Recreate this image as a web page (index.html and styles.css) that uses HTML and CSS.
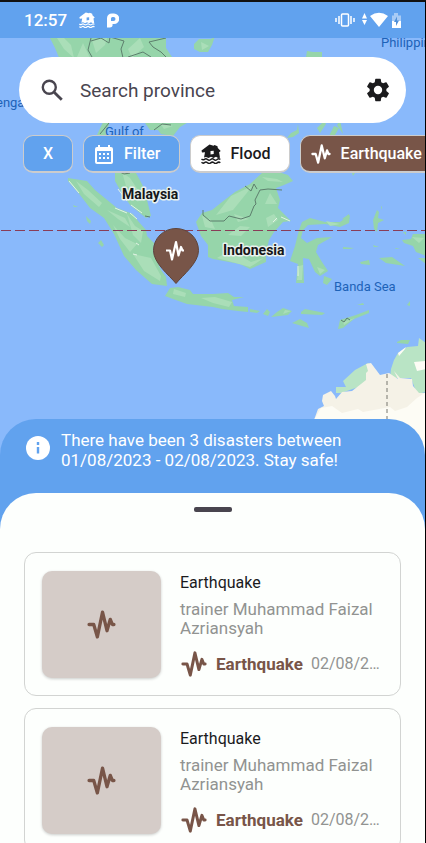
FILE: index.html
```html
<!DOCTYPE html>
<html lang="en">
<head>
<meta charset="utf-8">
<meta name="viewport" content="width=device-width, initial-scale=1">
<title>Disaster map</title>
<link rel="stylesheet" href="styles.css">
</head>
<body>
<svg class="defs" width="0" height="0" aria-hidden="true">
  <symbol id="quake" viewBox="0 0 28 28"><path d="M2 14h4.500L10 26 15 2 19.300 20 22.500 9 24.500 14h1.500" fill="none" stroke="currentColor" stroke-width="3.200" stroke-linejoin="round" stroke-linecap="round"/></symbol>
  <symbol id="flood" viewBox="0 0 20 20"><path d="M.5 6.500 8.500.5l4 1.200L13.500 1l3 1.200.3 1.800 2.900 3-1.600 1.200.9 5.500-2 .3-2-1.200-2.500 1.300-2.500-1.300-2.500 1.300-2.500-1.200-2 .6L4 8.200 1 8.500zM9.500 7v3.500l3.200-.4V6.700z" fill="currentColor" fill-rule="evenodd"/><path d="M.5 15q1.500 1.500 3 .3t3 .2 3.200 0 3.200 0 3.200 0 3.200 0M.5 18.300q1.500 1.500 3 .3t3 .2 3.200 0 3.200 0 3.200 0 3.200 0" fill="none" stroke="currentColor" stroke-width="1.500"/></symbol>
</svg>
<div class="app">
  <div class="map">
    <svg class="map-art" viewBox="0 0 425 490" preserveAspectRatio="xMidYMin slice" role="img" aria-label="Map of Indonesia">
      <rect width="425" height="490" fill="#89b9fb"/>
      <g fill="#96d5aa">
        <path d="M49 36 55 48 60 60H174L166 48 166 36z"/>
        <path d="M194 44 199 39 211 39 215 36 212 45 208 52 200 52 194 49z"/>
        <path d="M306 57 307 51 313 52 322 52 322 57z"/>
        <path d="M97 135 104 120H110L106 135zM143 120H192L180 127 173 136 161 134 158 130 150 130z"/>
        <path d="M115 171H135L144 188 151 216 146 218 130 205 120 190 115 181z"/>
        <path d="M68 178 87 181 95 190 117 208 133 214 138 221 146 230 147 236 154 243 153 252 161 270 166 277 167 286 152 284 136 270 124 256 114 234 104 218 90 208 80 195 68 181z"/>
        <path d="M73 205 78 207 74 207zM86 216 91 221 90 224 87 221zM98 243 101 240 104 245 102 247z"/>
        <path d="M165 296 170 288 178 287 190 290 193 294 213 294 228 293 234 297 244 297 232 300 234 306 248 307 248 312 238 311 222 309 213 307 187 304 173 299z"/>
        <path d="M250 309 260 311 257 313 250 312zM263 314 267 309 270 312 268 316zM271 317 277 312 283 308 292 311 288 315zM301 312 305 309 325 313 322 315 301 314zM292 323 300 319 307 323 309 328 302 326zM338 329 340 320 356 315 369 310 369 313 354 319 343 328zM357 305 363 303 364 305z"/>
        <path d="M196 222 202 213 212 210 222 202 235 192 250 184 262 173 275 171 288 175 293 181 284 185 276 188 280 200 278 208 285 215 291 221 283 222 274 232 269 240 266 253 266 262 250 269 240 264 213 259 208 257 208 245 201 236z"/>
        <path d="M299 230 302 222 310 218 325 222 340 222 350 215 349 223 340 227 325 224 308 225 303 230 301 238 307 243 317 238 332 237 318 245 316 252 322 262 328 271 320 276 315 272 309 259 303 258 304 283 296 283 298 264 290 261 295 246z"/>
        <path d="M324 276 332 279 327 285 323 283zM360 262 369 260 370 265 361 264zM379 258 392 257 405 266 386 263zM343 247 354 248 350 249 343 249zM373 245 379 247 374 247zM395 248 400 248 396 249zM373 220 377 210 379 212 378 218 384 220 378 223 377 232 374 229zM381 207 382 206 382 210z"/>
        <path d="M402 240 411 239 413 234 426 234V256L416 252 413 246 404 243zM418 258H426V264zM403 232 406 232 406 235zM407 305 410 301 410 306z"/>
        <path d="M287 138 291 133 297 130 298 124 299 133 293 137zM317 128 324 121 326 124 320 133zM329 136 334 126 339 128 335 135zM340 120 343 134 337 125zM352 173 355 173 353 176zM342 219 349 214 349 221z"/>
        <path d="M397 342 401 340 410 340 408 344 397 343z"/>
      </g>
      <g fill="#aadeb8">
        <path d="M57 38 64 49 74 58 71 45 64 38zM77 57 83 43 90 58zM92 40 107 38 105 45 96 53zM128 49 140 38 144 47 132 58zM201 42 209 46 202 50zM122 172 130 178 138 190 126 186zM126 191 140 203 132 198zM76 181 88 190 102 203 99 207 84 194zM107 210 125 218 130 227 118 219zM113 225 125 238 137 244 130 252 120 239zM127 214 135 226 143 231 141 243 133 235zM133 254 151 258 161 276 160 281 144 271zM174 289 186 293 185 297 173 294zM201 298 215 297 232 302 229 307 213 303zM216 215 231 196 252 186 246 194 233 210zM202 216 211 220 215 229 205 227zM262 177 277 179 283 182 268 181zM266 218 274 214 278 220 268 227zM217 258 231 250 251 262 264 258 250 267zM299 266 303 265 302 280 297 280zM317 267 325 270 320 274zM326 221 340 224 330 226zM412 237 424 238 419 243zM343 322 355 318 344 325zM285 310 291 311 283 314zM160 123 173 126 164 129z"/>
        <path d="M228 235 240 226 250 227 241 236zM270 193 277 204 265 204zM234 214 249 219 238 222z"/>
      </g>
      <g fill="none" stroke="#e2f3e4" stroke-width="1">
        <path d="M69 181 79 193M115 208 127 213M130 213 137 219M118 189 127 201M131 205 142 213M136 243 139 245M133 254 137 255M281 217 290 221M273 222 277 218M298 266V276"/>
      </g>
      <path fill="#b9e4c5" d="M336 387 346 387 343 381 355 370 368 363 372 365 370 383 341 393 336 393zM391 369 394 360 398 353 407 347 418 346 419 338 426 343V392L417 394 411 378 390 378z"/>
      <path fill="#f5f2e7" d="M314 420 318 409 324 406 322 401 323 395 331 391 335 396 336 399 342 392 352 391 361 384 366 380 366 373 368 371 366 364 371 363 380 375 389 373 398 379 394 371 400 378 412 379 413 386 419 393 426 393V490H314z"/>
      <path fill="#fdfcf5" d="M314 420 321 408 332 406 342 413 358 409 363 412 390 407 395 411 407 407 417 398 426 392V490H314zM414 362 426 361V369L417 371zM398 353 406 347 405 349 399 356z"/>
      <g fill="none" stroke="#5d7f6d" stroke-width="1">
        <path d="M91 38 88 50 92 57M91 41 101 38 109 43 110 37 124 41 121 49 123 58M128 57 137 54 143 52 151 57M166 38 149 42 153 47 161 52 166 57M100 134 109 123M154 130 162 124 171 125M120 172 124 174 130 173M145 216 150 217M203 210V215L210 221 224 221 229 216 241 219 250 216 254 206 256 204 255 200 260 190 268 189 282 190M245 186 251 191 254 184 257 189M341 320 344 322 347 318 350 320"/>
        <path d="M387 374V420" stroke="#77776e" stroke-dasharray="4 3"/>
      </g>
      <path d="M1 230.500H425" fill="none" stroke="#893d58" stroke-width="1" stroke-dasharray="10 4"/>
      <g class="sea-label">
        <text x="-4" y="107">enga</text>
        <text x="381" y="47">Philippin</text>
        <text x="105" y="136">Gulf of</text>
        <text x="334" y="291">Banda Sea</text>
      </g>
      <g class="country-label">
        <text x="122" y="199">Malaysia</text>
        <text x="223" y="255">Indonesia</text>
      </g>
      <g transform="translate(153 228)">
        <path d="M23 55.500C16 47 .5 35 .5 22.500a22.500 22 0 0 1 45 0C45.500 35 30 47 23 55.500z" fill="#785548" stroke="#5f4439"/>
        <path d="M13 22.500h4l2 9L23 14l2.500 13.500 2.500-8.500 1.500 3.500H31" fill="none" stroke="#fff" stroke-width="2.200" stroke-linejoin="round"/>
      </g>
    </svg>
  </div>

  <div class="status">
    <span class="time">12:57</span>
    <svg class="status-flood" viewBox="0 0 20 20"><use href="#flood"/></svg>
    <svg class="status-p" viewBox="0 0 12 15"><path d="M0 5a5 5 0 0 1 5-4.500h2a5 5 0 0 1 0 10.500H5.500A3 3 0 0 1 2.800 14.500H0zM5.500 4A1.500 1.500 0 0 0 4 5.500V8h2.500a2 2 0 0 0 0-4z" fill="#fff" fill-rule="evenodd"/></svg>
    <svg class="status-system" viewBox="0 0 66 17">
      <g fill="none" stroke="#fff" stroke-width="1.500"><rect x="6.500" y="2" width="7" height="12" rx="1"/><path d="M4 4v8M1 6v4M16 4v8M19 6v4"/></g>
      <path d="M29.500 1 32 6.500h-5zM29.500 13 27 8h5zM35 4q9-6.500 18 0l-9 11z" fill="#fff"/>
      <path d="M57 3.500h2V1h4v2.500h3V9h-9z" fill="#a8cbf5"/><path d="M57 9h9v7h-9z" fill="#fff"/><path d="m62 4.500-3 5.500h2v4l3-5.500h-2z" fill="#4f8fd8"/>
    </svg>
  </div>

  <form class="search">
    <label for="province"><svg viewBox="0 0 24 24" aria-label="Search"><circle cx="9.500" cy="9.500" r="6" fill="none" stroke="currentColor" stroke-width="2.200"/><path d="m14 14 7 7" stroke="currentColor" stroke-width="2.600"/></svg></label>
    <input id="province" type="text" placeholder="Search province">
    <button type="button" aria-label="Settings"><svg viewBox="0 0 24 24"><path fill="currentColor" d="M19.140 12.940c.04-.3.060-.61.060-.94s-.02-.64-.07-.94l2.030-1.580a.49.49 0 0 0 .12-.61l-1.920-3.320a.49.49 0 0 0-.59-.22l-2.390.96c-.5-.38-1.030-.7-1.620-.94l-.36-2.540a.48.48 0 0 0-.48-.41h-3.840c-.24 0-.43.17-.47.41l-.36 2.540c-.59.24-1.130.57-1.620.94l-2.390-.96a.49.49 0 0 0-.59.22L2.740 8.870a.47.47 0 0 0 .12.610l2.030 1.580a7.800 7.800 0 0 0-.01 1.880l-2.030 1.580a.49.49 0 0 0-.12.610l1.920 3.320c.12.220.37.290.59.220l2.390-.96c.5.380 1.030.7 1.620.94l.36 2.540c.05.240.24.410.48.410h3.840c.24 0 .44-.17.47-.41l.36-2.540c.59-.24 1.130-.56 1.620-.94l2.390.96c.22.080.47 0 .59-.22l1.920-3.320a.47.47 0 0 0-.12-.61zM12 15.600a3.600 3.600 0 1 1 0-7.200 3.600 3.600 0 0 1 0 7.200z"/></svg></button>
  </form>

  <nav class="chips" aria-label="Disaster filters">
    <button class="chip chip-clear" type="button">X</button>
    <button class="chip" type="button"><svg viewBox="0 0 20 20"><path fill="currentColor" fill-rule="evenodd" d="M4 1h2v2h8V1h2v2h1a2 2 0 0 1 2 2v13a2 2 0 0 1-2 2H3a2 2 0 0 1-2-2V5a2 2 0 0 1 2-2h1zM3 7v11h14V7z"/><path fill="currentColor" d="M5 9h2v2H5zM9 9h2v2H9zM13 9h2v2h-2zM5 13h2v2H5zM9 13h2v2H9zM13 13h2v2h-2z"/></svg>Filter</button>
    <button class="chip chip-flood" type="button"><svg viewBox="0 0 20 20"><use href="#flood"/></svg>Flood</button>
    <button class="chip chip-quake" type="button"><svg viewBox="0 0 28 28"><use href="#quake"/></svg>Earthquake</button>
  </nav>

  <section class="sheet">
    <div class="notice">
      <svg viewBox="0 0 24 24" aria-hidden="true"><circle cx="12" cy="12" r="12" fill="#fff"/><path d="M12 11v6.500M12 6v3" stroke="#61a2ee" stroke-width="2.400"/></svg>
      <p>There have been 3 disasters between 01/08/2023 - 02/08/2023. Stay safe!</p>
    </div>
    <div class="reports">
      <div class="handle"></div>
      <article class="card">
        <div class="thumb"><svg viewBox="0 0 28 28"><use href="#quake"/></svg></div>
        <div class="details">
          <h2>Earthquake</h2>
          <p>trainer Muhammad Faizal Azriansyah</p>
          <div class="meta"><svg viewBox="0 0 28 28"><use href="#quake"/></svg><strong>Earthquake</strong><time datetime="2023-08-02">02/08/2023</time></div>
        </div>
      </article>
      <article class="card">
        <div class="thumb"><svg viewBox="0 0 28 28"><use href="#quake"/></svg></div>
        <div class="details">
          <h2>Earthquake</h2>
          <p>trainer Muhammad Faizal Azriansyah</p>
          <div class="meta"><svg viewBox="0 0 28 28"><use href="#quake"/></svg><strong>Earthquake</strong><time datetime="2023-08-02">02/08/2023</time></div>
        </div>
      </article>
    </div>
  </section>
</div>
</body>
</html>
```
FILE: styles.css
```css
* { box-sizing: border-box; }
body { margin: 0; font-family: Roboto, "Liberation Sans", sans-serif; }
button, input { font: inherit; }
svg { display: block; flex: none; }
.defs { position: absolute; }

.app {
  position: relative;
  display: flex;
  flex-direction: column;
  height: 100vh;
  overflow: hidden;
  border-top: 2px solid #111;
  border-right: 1px solid #000;
}

.map { position: absolute; inset: -2px 0 auto; z-index: -1; }
.map-art { width: 100%; height: 490px; }
.sea-label { font-size: 13px; fill: #1d62b8; }
.country-label {
  font-size: 14px;
  font-weight: 700;
  fill: #151719;
  stroke: #e9f2ee;
  stroke-width: 3px;
  stroke-linejoin: round;
  paint-order: stroke;
}

.status {
  display: flex;
  flex: none;
  align-items: center;
  height: 36px;
  padding: 0 24px;
  background: #61a2ee;
  color: #fff;
}
.time { font-size: 17px; font-weight: 500; }
.status-flood { width: 16px; height: 16px; margin-left: 12px; }
.status-p { width: 12px; height: 15px; margin-left: 12px; }
.status-system { width: 66px; height: 17px; margin-left: auto; }

.search {
  display: flex;
  flex: none;
  align-items: center;
  height: 66px;
  margin: 19px 19px 0;
  padding: 0 14px 0 20px;
  border-radius: 33px;
  background: #fff;
  color: #49454f;
}
.search label svg { width: 26px; height: 26px; }
.search input {
  flex: 1;
  min-width: 0;
  margin-left: 15px;
  padding: 0;
  border: 0;
  outline: 0;
  background: none;
  font-size: 19px;
}
.search input::placeholder { color: #49454f; opacity: 1; }
.search button { padding: 0; border: 0; background: none; color: #1b1b1d; }
.search button svg { width: 28px; height: 28px; }

.chips {
  display: flex;
  flex: none;
  gap: 10px;
  margin-top: 12px;
  padding-left: 23px;
  overflow: hidden;
}
.chip {
  display: flex;
  flex: none;
  align-items: center;
  justify-content: center;
  gap: 10px;
  height: 38px;
  padding: 0 18px 0 10px;
  border: 1px solid #ccc;
  border-bottom-width: 2px;
  border-radius: 10px;
  background: #61a2ee;
  color: #fff;
  font-size: 16px;
  font-weight: 500;
}
.chip svg { width: 20px; height: 20px; }
.chip-clear { width: 50px; padding: 0; }
.chip-flood { background: #fff; color: #1b1b1d; }
.chip-quake { background: #785548; }

.sheet {
  display: flex;
  flex: 1;
  flex-direction: column;
  min-height: 0;
  margin-top: 246px;
  border-radius: 36px 36px 0 0;
  background: #61a2ee;
}
.notice {
  display: flex;
  flex: none;
  gap: 11px;
  height: 74px;
  padding: 11px 24px 0 26px;
  color: #fff;
}
.notice svg { width: 24px; height: 24px; margin-top: 6px; }
.notice p { max-width: 290px; margin: 0; font-size: 17px; line-height: 20px; }
.reports {
  display: flex;
  flex: 1;
  flex-direction: column;
  gap: 12px;
  min-height: 0;
  padding: 14px 24px 0;
  overflow-y: auto;
  scrollbar-width: none;
  border-radius: 36px 36px 0 0;
  background: #fdfffd;
}
.handle {
  flex: none;
  align-self: center;
  width: 38px;
  height: 5px;
  margin-bottom: 28px;
  border-radius: 2px;
  background: #49454f;
}
.card {
  display: flex;
  flex: none;
  gap: 19px;
  padding: 18px 18px 17px 17px;
  border: 1px solid #d2d4d2;
  border-radius: 12px;
}
.thumb {
  display: grid;
  flex: none;
  place-items: center;
  width: 119px;
  height: 107px;
  border-radius: 10px;
  background: #d5ccc8;
  box-shadow: 0 1px 3px #0003;
  color: #785548;
}
.thumb svg { width: 29px; height: 29px; }
.details { flex: 1; min-width: 0; }
.details h2 { margin: 2px 0 7px; color: #1b1b1d; font-size: 16px; font-weight: 400; line-height: 20px; }
.details p { margin: 0; color: #919391; font-size: 17px; line-height: 19px; }
.meta { display: flex; align-items: center; gap: 8px; height: 27px; margin-top: 12px; color: #785548; font-size: 17px; }
.meta svg { width: 28px; height: 26px; }
.meta strong { font-weight: 700; }
.meta time { flex: 1; min-width: 0; overflow: hidden; color: #919391; font-size: 16px; text-overflow: ellipsis; white-space: nowrap; }
```
